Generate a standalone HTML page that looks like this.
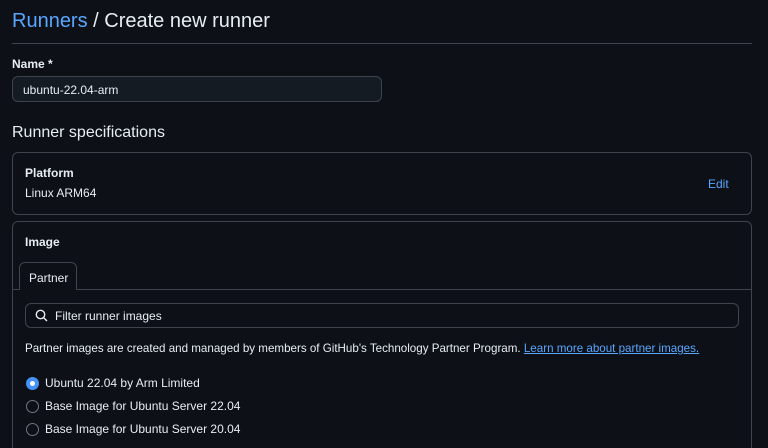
<!DOCTYPE html>
<html><head><style>
*{margin:0;padding:0;box-sizing:border-box}
html,body{width:768px;height:448px;overflow:hidden}
body{background:#0d1117;color:#e6edf3;font-family:"Liberation Sans",sans-serif;position:relative}
.a{position:absolute;white-space:nowrap}
.radio{position:absolute;left:26px;width:13px;height:13px;border-radius:50%;border:1px solid #6e7681}
</style></head><body>
<div class="a" style="left:12px;top:10px;font-size:20px;"><span style="color:#58a6ff">Runners</span> / Create new runner</div>
<div class="a" style="left:12px;top:43px;width:740px;height:1px;background:#3d444d"></div>
<div class="a" style="left:12px;top:57px;font-size:12px;font-weight:bold">Name *</div>
<div class="a" style="left:12px;top:76px;width:370px;height:26px;background:#151b23;border:1px solid #3d444d;border-radius:6px;font-size:12px;padding:6px 10px">ubuntu-22.04-arm</div>
<div class="a" style="left:12px;top:124px;font-size:16px">Runner specifications</div>
<div class="a" style="left:12px;top:152px;width:740px;height:63px;border:1px solid #3d444d;border-radius:6px"></div>
<div class="a" style="left:25px;top:166px;font-size:12px;font-weight:bold">Platform</div>
<div class="a" style="left:25px;top:186px;font-size:12px">Linux ARM64</div>
<div class="a" style="left:708px;top:177px;font-size:12px;color:#58a6ff">Edit</div>
<div class="a" style="left:12px;top:221px;width:740px;height:227px;border:1px solid #3d444d;border-bottom:none;border-radius:6px 6px 0 0"></div>
<div class="a" style="left:25px;top:235px;font-size:12px;font-weight:bold">Image</div>
<div class="a" style="left:13px;top:289px;width:738px;height:1px;background:#3d444d"></div>
<div class="a" style="left:19px;top:262px;width:58px;height:28px;border:1px solid #3d444d;border-bottom:none;border-radius:6px 6px 0 0;background:#0d1117;font-size:12px;padding:8px 9px">Partner</div>
<div class="a" style="left:25px;top:303px;width:714px;height:25px;border:1px solid #3d444d;border-radius:6px;font-size:12px;padding:5px 0 0 29px">Filter runner images</div>
<svg class="a" style="left:35px;top:309px" width="13" height="13" viewBox="0 0 13 13"><circle cx="5.5" cy="5.5" r="4.2" fill="none" stroke="#e6edf3" stroke-width="1.4"/><path d="M8.6 8.6L12 12" stroke="#e6edf3" stroke-width="1.4"/></svg>
<div class="a" style="left:25px;top:342px;font-size:11.6px">Partner images are created and managed by members of GitHub's Technology Partner Program. <span style="color:#58a6ff;text-decoration:underline">Learn more about partner images.</span></div>
<div class="radio" style="top:377px;border:4px solid #4493f8;background:#fff"></div>
<div class="radio" style="top:400px"></div>
<div class="radio" style="top:423px"></div>
<div class="a" style="left:45px;top:376px;font-size:12px">Ubuntu 22.04 by Arm Limited</div>
<div class="a" style="left:45px;top:399px;font-size:12px">Base Image for Ubuntu Server 22.04</div>
<div class="a" style="left:45px;top:422px;font-size:12px">Base Image for Ubuntu Server 20.04</div>
</body></html>
